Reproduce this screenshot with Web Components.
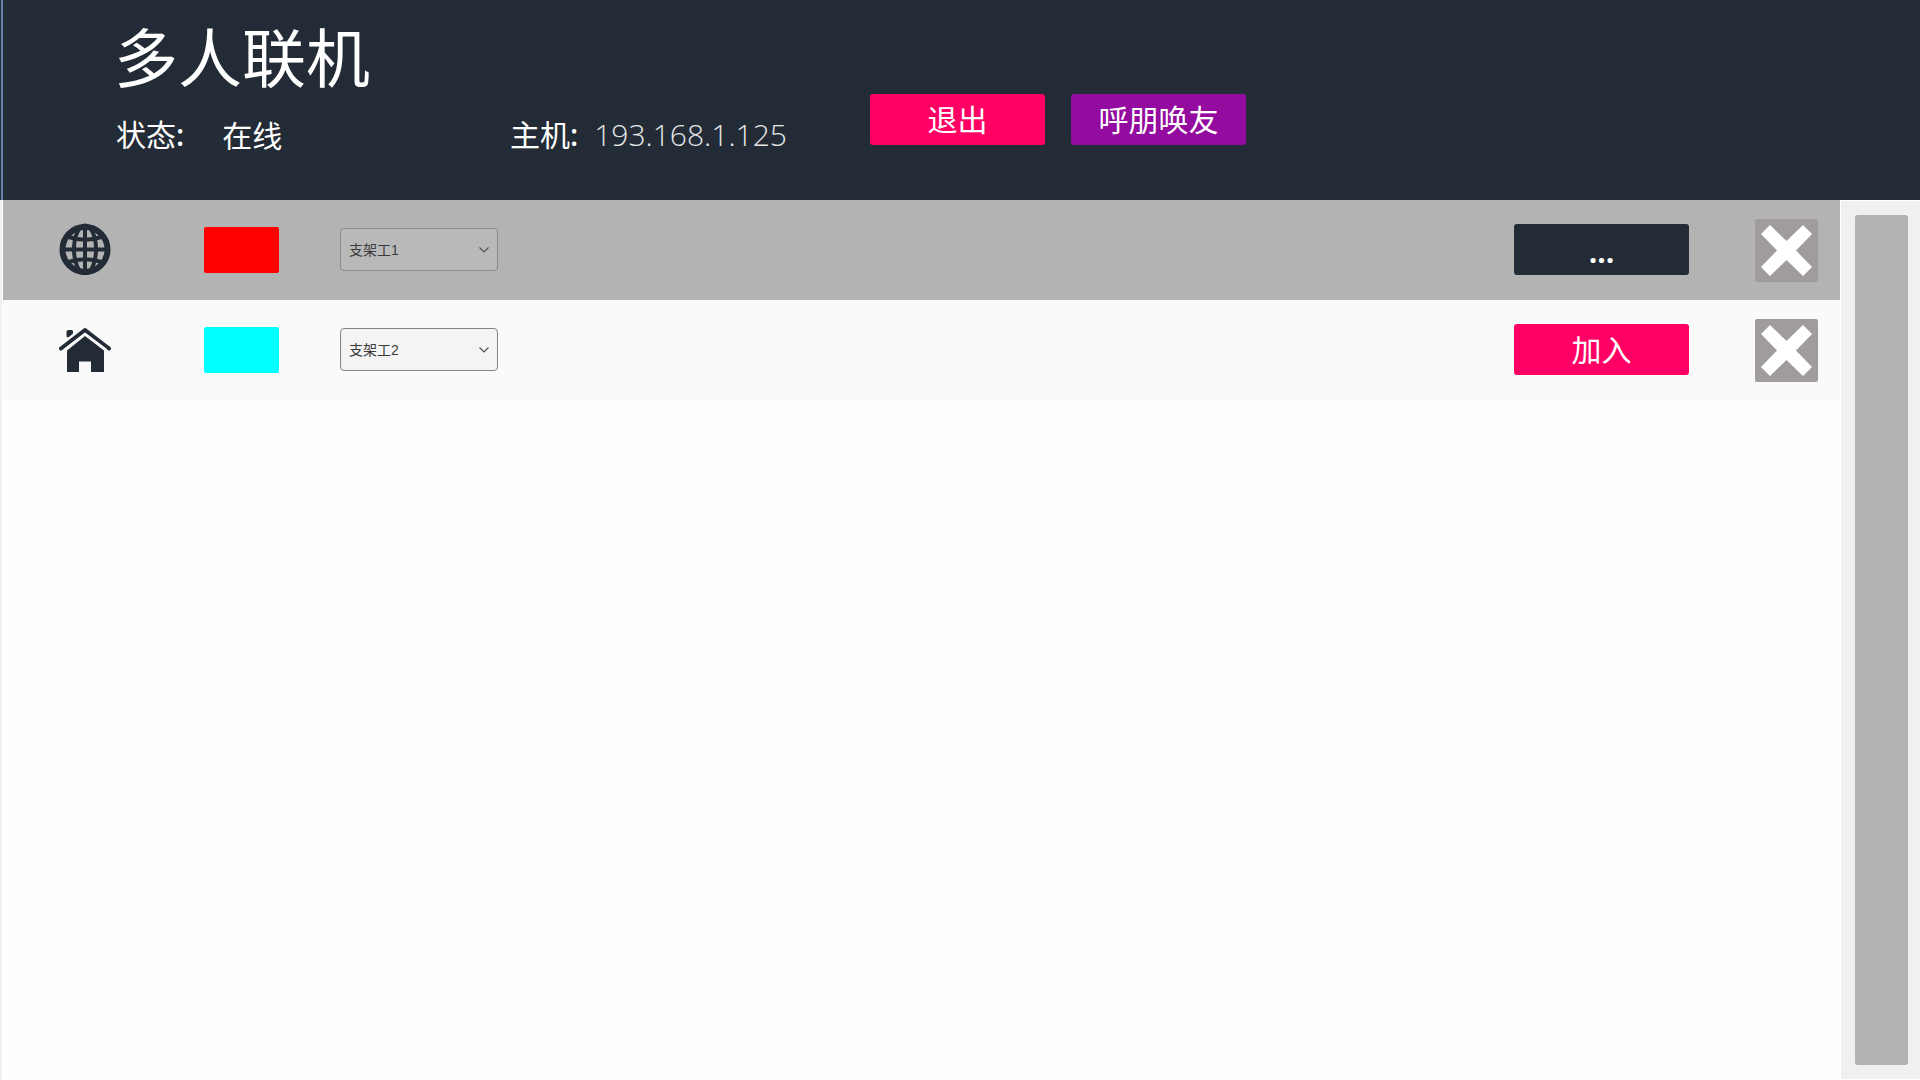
<!DOCTYPE html>
<html lang="zh-CN">
<head>
<meta charset="utf-8">
<title>多人联机</title>
<style>
html, body { margin: 0; height: 100%; }
body { font-family: "Open Sans", "Noto Sans CJK SC", sans-serif; background: #fff; overflow: hidden; }
</style>
</head>
<body>
<lobby-page></lobby-page>
<script>
const define = (name, html, init) => {
  const template = document.createElement('template');
  template.innerHTML = html;
  customElements.define(name, class extends HTMLElement {
    constructor() {
      super();
      this.attachShadow({ mode: 'open' }).append(template.content.cloneNode(true));
    }
    connectedCallback() { if (init) init(this, this.shadowRoot); }
  });
};

define('action-button', `
<style>
:host { display: block; width: 175px; height: 51px; flex: none; }
button { width: 100%; height: 100%; border: 0; border-radius: 3px; padding: 0 0 4px; color: #fff; background: var(--fill, #ff0064);
  font: 400 30px/46px "Noto Sans CJK SC", sans-serif; cursor: pointer; }
:host([dots]) button { font-family: "Open Sans", sans-serif; font-weight: 700; padding: 4px 0 0; }
</style>
<button type="button"><slot></slot></button>`);

define('remove-button', `
<style>
:host { display: block; width: 63px; height: 63px; flex: none; }
button { display: block; width: 100%; height: 100%; border: 0; border-radius: 2px; padding: 0; background: #a19c9c; cursor: pointer; }
svg { display: block; }
</style>
<button type="button" aria-label="移除"><svg width="63" height="63" viewBox="0 0 63 63"><path fill="#fff" d="M15 6 31.500 22 48 6 57 15 41 31.500 57 48 48 57 31.500 41 15 57 6 48 22 31.500 6 15Z"/></svg></button>`);

define('status-item', `
<style>
:host { display: flex; align-items: center; font: 400 30px/40px "Noto Sans CJK SC", sans-serif; color: #fff; white-space: pre; }
b { font: 600 30px/40px "Open Sans", sans-serif; }
.value { margin-left: var(--gap, 16px); }
</style>
<span><slot name="label"></slot><b>:</b></span><span class="value"><slot></slot></span>`);

define('lobby-header', `
<style>
:host { display: flex; align-items: flex-start; height: 200px; box-sizing: border-box; background: #232c36; padding-left: 111px; }
.info { width: 756px; padding-top: 22px; }
h1 { margin: 0; font: 400 64px/64px "Noto Sans CJK SC", sans-serif; color: #fff; }
.status { display: grid; grid-template-columns: 394px 1fr; margin-top: 27px; padding-left: 2px; }
.online { --gap: 38px; }
.ip { font-family: "Open Sans", sans-serif; font-weight: 300; color: #e4e6e8; }
.actions { display: flex; gap: 26px; padding-top: 94px; }
.invite { --fill: #930c9f; }
</style>
<div class="info">
  <h1>多人联机</h1>
  <div class="status">
    <status-item class="online"><span slot="label">状态</span>在线</status-item>
    <status-item><span slot="label">主机</span><span class="ip">193.168.1.125</span></status-item>
  </div>
</div>
<div class="actions"><action-button>退出</action-button><action-button class="invite">呼朋唤友</action-button></div>`);

define('role-select', `
<style>
:host { display: grid; width: 158px; height: 43px; margin-bottom: 1px; flex: none; align-items: center; }
select, svg { grid-area: 1 / 1; }
select { appearance: none; width: 100%; height: 100%; box-sizing: border-box; margin: 0; padding: 0 8px; border: 1px solid var(--line, #858585);
  border-radius: 4px; background: var(--box, #f4f4f4); color: #3c3c3c; opacity: 1; font: 400 14px/20px "Liberation Sans", "Noto Sans CJK SC", sans-serif; }
svg { justify-self: end; margin-right: 8px; pointer-events: none; }
</style>
<select aria-label="角色"><option></option></select>
<svg width="12" height="8" viewBox="0 0 12 8"><path d="M1.500 1.500 6 6 10.500 1.500" fill="none" stroke="#505050" stroke-width="1.200"/></svg>`,
(host, root) => {
  root.querySelector('option').textContent = host.getAttribute('value');
});

define('player-row', `
<style>
:host { display: flex; align-items: center; height: 100px; box-sizing: border-box; padding: 0 22px 0 56px; background: #fafafa; }
:host([active]) { background: #b3b3b3; }
.icon { width: 52px; height: 52px; margin-bottom: 2px; flex: none; }
.swatch { width: 75px; height: 46px; border-radius: 2px; margin: 0 61px 0 93px; flex: none; background: var(--color); }
.action { margin-left: auto; margin-bottom: 1px; }
remove-button { margin: 1px 0 0 66px; }
</style>
<div class="icon"><slot name="icon"></slot></div>
<div class="swatch"></div>
<slot name="role"></slot>
<div class="action"><slot name="action"></slot></div>
<remove-button></remove-button>`);

define('lobby-scrollbar', `
<style>
:host { display: flex; width: 79px; box-sizing: border-box; margin: 1px 0 1px 1px; padding: 14px 12px 14px 14px; background: #f0f0f0; flex: none; }
div { flex: 1; border-radius: 3px; background: #b2b2b2; }
</style>
<div></div>`);

define('lobby-page', `
<style>
:host { display: flex; flex-direction: column; height: 100vh; }
.top { display: flex; flex: none; }
.top i { width: 3px; box-sizing: border-box; border-left: 1px solid #232c36; background: #6583ad; }
lobby-header { flex: 1; }
.body { display: flex; flex: 1; min-height: 0; }
.body i { width: 3px; box-sizing: border-box; border-right: 1px solid #fff; background: #f0f0f0; }
.list { flex: 1; background: #fefefe; }
svg { display: block; }
.red { --color: #f00; }
.cyan { --color: #0ff; }
.red role-select { --box: #b9b9b9; --line: #8b8b8b; }
.red action-button { --fill: #232c36; }
</style>
<div class="top"><i></i><lobby-header></lobby-header></div>
<div class="body">
  <i></i>
  <div class="list">
    <player-row active class="red">
      <svg slot="icon" width="52" height="52" viewBox="0 0 52 52" fill="none" stroke="#232c36" stroke-width="4">
        <circle cx="26" cy="26.500" r="22.500" stroke-width="6"/><ellipse cx="26" cy="26.500" rx="11" ry="24"/>
        <path d="M26 3V50M3 26.500H49M8 13.500Q26 20 44 13.500M8 39.500Q26 33 44 39.500"/>
      </svg>
      <role-select slot="role" value="支架工1"></role-select>
      <action-button slot="action" dots>...</action-button>
    </player-row>
    <player-row class="cyan">
      <svg slot="icon" width="52" height="52" viewBox="0 0 52 52" fill="#232c36">
        <path d="M8 27.500 26 13 45 27.500V49H32V38.500H20V49H8ZM7.500 9Q7.500 7 9.500 7H12.500Q14.500 7 14 10.500L10 14Q7.500 15 7.500 13Z"/>
        <path d="M2 25.500 26 7 50 25.500" fill="none" stroke="#232c36" stroke-width="4" stroke-linecap="round" stroke-linejoin="round"/>
        <path d="M6 26.500 26 11 47 26.500" fill="none" stroke="#fafafa" stroke-width="2"/>
      </svg>
      <role-select slot="role" value="支架工2"></role-select>
      <action-button slot="action">加入</action-button>
    </player-row>
  </div>
  <lobby-scrollbar></lobby-scrollbar>
</div>`);
</script>
</body>
</html>
